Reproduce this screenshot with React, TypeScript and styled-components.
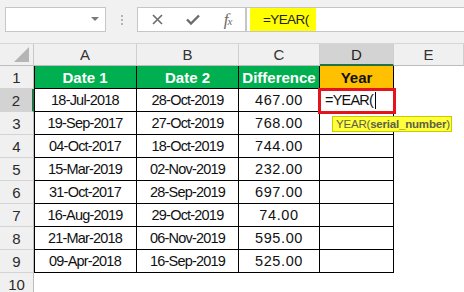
import React from "react";
import styled, { createGlobalStyle } from "styled-components";

const GlobalStyle = createGlobalStyle`
  html, body { margin: 0; padding: 0; background: #fff; }
  body {
    font-family: "Liberation Sans", Arial, sans-serif;
    width: 464px; height: 292px; overflow: hidden;
  }
`;

const Toolbar = styled.div`
  height: 43px;
  box-sizing: border-box;
  background: #f1f1f1;
  display: flex;
  align-items: flex-start;
  padding: 7px 0 0 5px;
`;

const Box = styled.div`
  height: 25px;
  box-sizing: border-box;
  background: #fff;
  border: 1px solid #c6c6c6;
  display: flex;
  align-items: center;
`;

const NameBox = styled(Box)`
  width: 101px;
  justify-content: flex-end;
  padding-right: 6px;
`;

const Caret = styled.span`
  width: 0;
  height: 0;
  border-left: 4px solid transparent;
  border-right: 4px solid transparent;
  border-top: 4px solid #7a7a7a;
  margin-top: -2px;
`;

const Grip = styled.div`
  width: 31px;
  height: 25px;
  display: flex;
  flex-direction: column;
  align-items: center;
  justify-content: center;
  gap: 2px;
`;

const Dot = styled.span`
  width: 2px;
  height: 2px;
  background: #b4b4b4;
`;

const FxBox = styled(Box)`
  width: 109px;
  padding-left: 2px;
`;

const IconSlot = styled.span`
  width: 35px;
  display: flex;
  justify-content: center;
  align-items: center;
  color: #6b6b6b;
`;

const FxLabel = styled.span`
  font-family: "Liberation Serif", "Times New Roman", serif;
  font-style: italic;
  font-size: 17px;
  color: #6b6b6b;
  letter-spacing: -1px;
  & > small { font-size: 11px; }
`;

const Formula = styled(Box)`
  flex: 1;
  border-right: none;
  padding-left: 3px;
  align-items: stretch;
`;

const Highlight = styled.span`
  background: #ffff00;
  padding: 0 7px 0 13px;
  display: flex;
  align-items: center;
  font-size: 13.5px;
  color: #222;
  letter-spacing: -0.6px;
`;

const Sheet = styled.div`
  position: relative;
  display: grid;
  grid-template-columns: 34px 103px 102px 81px 74px 70px;
  grid-template-rows: 22px;
  grid-auto-rows: 23px;
  border-top: 1px solid #d6d6d6;
  box-sizing: border-box;
`;

const Corner = styled.div`
  background: #f0f0f0;
  border-right: 1px solid #c8c8c8;
  border-bottom: 1px solid #bdbdbd;
  box-sizing: border-box;
  display: flex;
  align-items: flex-end;
  justify-content: flex-end;
  padding: 0 4px 3px 0;
`;

const Tri = styled.span`
  width: 0;
  height: 0;
  border-left: 15px solid transparent;
  border-bottom: 15px solid #b5b5b5;
`;

const ColHead = styled.div<{ $sel?: boolean }>`
  background: ${(p) => (p.$sel ? "#d3d3d3" : "#f0f0f0")};
  border-right: 1px solid #cfcfcf;
  border-bottom: ${(p) => (p.$sel ? "2px solid #217346" : "1px solid #bdbdbd")};
  box-sizing: border-box;
  display: flex;
  align-items: center;
  justify-content: center;
  font-size: 15px;
  color: ${(p) => (p.$sel ? "#1f1f1f" : "#333")};
`;

const RowHead = styled.div<{ $sel?: boolean }>`
  background: ${(p) => (p.$sel ? "#d3d3d3" : "#f0f0f0")};
  border-right: ${(p) => (p.$sel ? "2px solid #217346" : "1px solid #bdbdbd")};
  border-bottom: 1px solid #d4d4d4;
  box-sizing: border-box;
  display: flex;
  align-items: center;
  justify-content: center;
  font-size: 15px;
  color: #2a2a2a;
`;

const Cell = styled.div<{
  $bg?: string;
  $bold?: boolean;
  $color?: string;
  $table?: boolean;
  $first?: boolean;
  $spacing?: number;
  $left?: boolean;
}>`
  background: ${(p) => p.$bg || "#fff"};
  box-sizing: border-box;
  border-right: ${(p) => (p.$table ? "1px solid #000" : "none")};
  border-bottom: ${(p) => (p.$table ? "1px solid #000" : "none")};
  box-shadow: ${(p) => (p.$first ? "inset 1px 0 0 #000" : "none")};
  display: flex;
  align-items: center;
  justify-content: ${(p) => (p.$left ? "flex-start" : "center")};
  padding-left: ${(p) => (p.$left ? "5px" : "0")};
  font-size: ${(p) => (p.$bold ? "15px" : "14.5px")};
  font-weight: ${(p) => (p.$bold ? 700 : 400)};
  color: ${(p) => p.$color || "#111"};
  letter-spacing: ${(p) => (p.$spacing ?? 0)}px;
  white-space: nowrap;
  overflow: hidden;
`;

const Caret2 = styled.span`
  display: inline-block;
  width: 1px;
  height: 17px;
  background: #000;
  margin-left: 2px;
`;

const Selection = styled.div`
  position: absolute;
  left: 318px;
  top: 44px;
  width: 78px;
  height: 26px;
  box-sizing: border-box;
  border: 3px solid #e3141e;
  pointer-events: none;
`;

const Tip = styled.div`
  position: absolute;
  left: 332px;
  top: 72px;
  width: 120px;
  height: 16px;
  box-sizing: border-box;
  background: #ffff3a;
  border: 1px solid #c9c900;
  font-size: 11.5px;
  color: #5e5e4a;
  display: flex;
  align-items: center;
  padding-left: 3px;
  letter-spacing: -0.2px;
  white-space: nowrap;
  & > b { font-weight: 700; }
`;

const rows: [string, string, string][] = [
  ["18-Jul-2018", "28-Oct-2019", "467.00"],
  ["19-Sep-2017", "27-Oct-2019", "768.00"],
  ["04-Oct-2017", "18-Oct-2019", "744.00"],
  ["15-Mar-2019", "02-Nov-2019", "232.00"],
  ["31-Oct-2017", "28-Sep-2019", "697.00"],
  ["16-Aug-2019", "29-Oct-2019", "74.00"],
  ["21-Mar-2018", "06-Nov-2019", "595.00"],
  ["09-Apr-2018", "16-Sep-2019", "525.00"],
];

const GREEN = "#00b050";

export default function App() {
  return (
    <>
      <GlobalStyle />
      <Toolbar>
        <NameBox>
          <Caret />
        </NameBox>
        <Grip>
          <Dot />
          <Dot />
          <Dot />
        </Grip>
        <FxBox>
          <IconSlot>
            <svg width="11" height="11" viewBox="0 0 11 11">
              <path d="M1 1 L10 10 M10 1 L1 10" stroke="#6b6b6b" strokeWidth="1.6" fill="none" />
            </svg>
          </IconSlot>
          <IconSlot>
            <svg width="14" height="11" viewBox="0 0 14 11">
              <path d="M1 5.5 L5 9.5 L13 1.5" stroke="#6b6b6b" strokeWidth="2.4" fill="none" />
            </svg>
          </IconSlot>
          <IconSlot>
            <FxLabel>
              f<small>x</small>
            </FxLabel>
          </IconSlot>
        </FxBox>
        <Formula>
          <Highlight>=YEAR(</Highlight>
        </Formula>
      </Toolbar>
      <Sheet>
        <Corner>
          <Tri />
        </Corner>
        <ColHead>A</ColHead>
        <ColHead>B</ColHead>
        <ColHead>C</ColHead>
        <ColHead $sel>D</ColHead>
        <ColHead>E</ColHead>

        <RowHead>1</RowHead>
        <Cell $bg={GREEN} $bold $color="#fff" $table $first>Date 1</Cell>
        <Cell $bg={GREEN} $bold $color="#fff" $table>Date 2</Cell>
        <Cell $bg={GREEN} $bold $color="#fff" $table>Difference</Cell>
        <Cell $bg="#ffc000" $bold $color="#111" $table>Year</Cell>
        <Cell />

        {rows.map((r, i) => (
          <React.Fragment key={i}>
            <RowHead $sel={i === 0}>{i + 2}</RowHead>
            <Cell $table $first $spacing={-0.8}>{r[0]}</Cell>
            <Cell $table $spacing={-0.8}>{r[1]}</Cell>
            <Cell $table $spacing={0.6}>{r[2]}</Cell>
            {i === 0 ? (
              <Cell $table $left $spacing={-0.8}>
                =YEAR(
                <Caret2 />
              </Cell>
            ) : (
              <Cell $table />
            )}
            <Cell />
          </React.Fragment>
        ))}

        <RowHead>10</RowHead>
        <Cell />
        <Cell />
        <Cell />
        <Cell />
        <Cell />

        <Selection />
        <Tip>
          YEAR(<b>serial_number</b>)
        </Tip>
      </Sheet>
    </>
  );
}
